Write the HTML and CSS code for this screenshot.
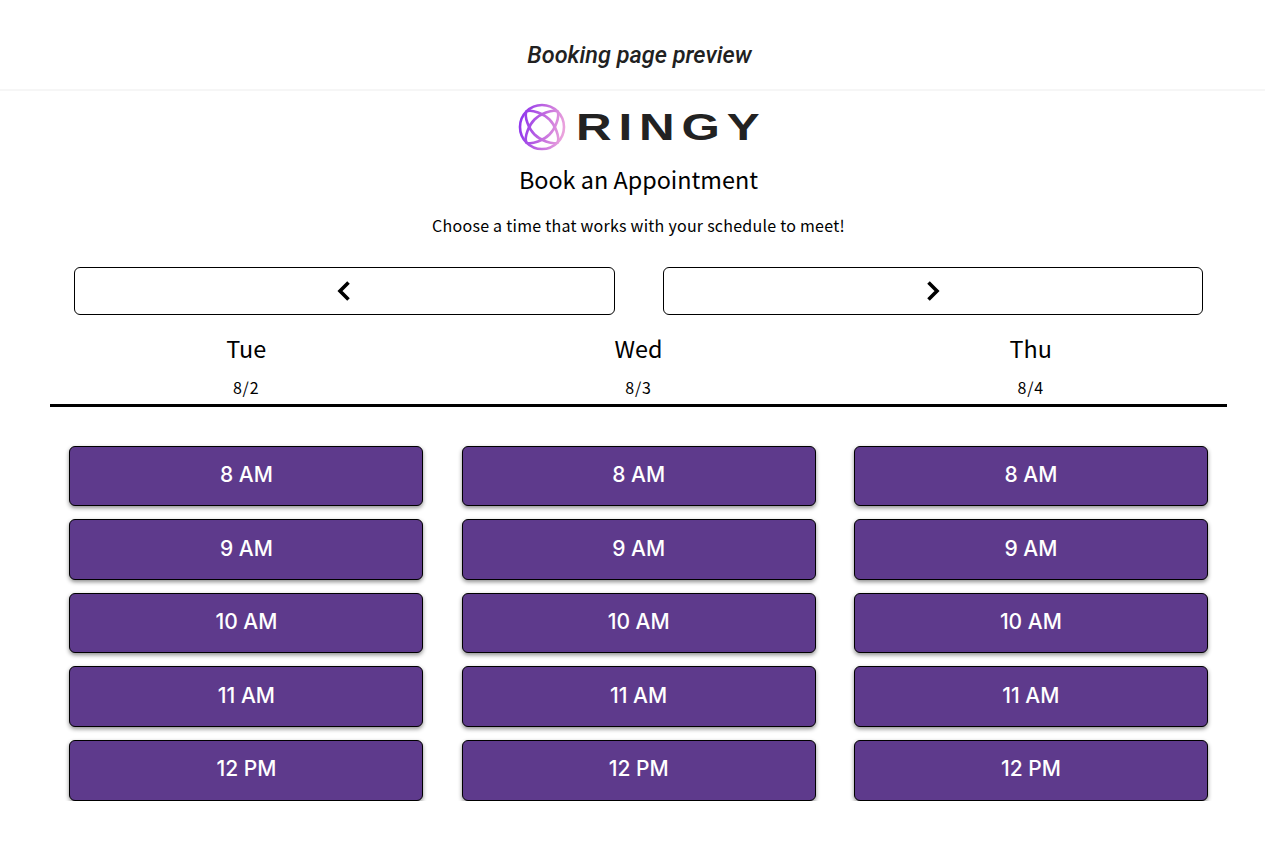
FILE: index.html
```html
<!DOCTYPE html>
<html lang="en">
<head>
  <meta charset="UTF-8" />
  <title>Booking page preview</title>
  <link rel="stylesheet" href="styles.css">
</head>
<body>

<header class="previewBar">Booking page preview</header>

<main class="booking">
  <div class="logo">
    <svg class="logoMark" width="48" height="48" viewBox="0 0 48 48" fill="none">
      <defs>
        <linearGradient id="ringyGrad" gradientUnits="userSpaceOnUse" x1="1" y1="20" x2="47" y2="28">
          <stop offset="0" stop-color="#8f35ee" />
          <stop offset="0.5" stop-color="#c069e0" />
          <stop offset="1" stop-color="#eda6dc" />
        </linearGradient>
      </defs>
      <g stroke="url(#ringyGrad)" stroke-width="2.6">
        <circle cx="24" cy="24" r="22" />
        <path d="M8.400 8.400C14 6 26 11 31.500 16.500C37 22 42 34 39.600 39.600C34 42 22 37 16.500 31.500C11 26 6 14 8.400 8.400Z" />
        <path d="M39.600 8.400C34 6 22 11 16.500 16.500C11 22 6 34 8.400 39.600C14 42 26 37 31.500 31.500C37 26 42 14 39.600 8.400Z" />
      </g>
    </svg>
    <span class="logoText">RINGY</span>
  </div>

  <h1 class="title">Book an Appointment</h1>
  <p class="subtitle">Choose a time that works with your schedule to meet!</p>

  <div class="navRow">
    <button class="navButton" aria-label="Previous">
      <svg width="24" height="24" viewBox="0 0 24 24"><path d="M16.500 3.500 8 12l8.500 8.500" /></svg>
    </button>
    <button class="navButton" aria-label="Next">
      <svg width="24" height="24" viewBox="0 0 24 24"><path d="M7.500 3.500 16 12l-8.500 8.500" /></svg>
    </button>
  </div>

  <div class="dayHead">
    <div class="day"><div class="dayName">Tue</div><div class="dayDate">8/2</div></div>
    <div class="day"><div class="dayName">Wed</div><div class="dayDate">8/3</div></div>
    <div class="day"><div class="dayName">Thu</div><div class="dayDate">8/4</div></div>
  </div>

  <div class="slots">
    <div class="slotColumn">
      <button class="slot">8 AM</button>
      <button class="slot">9 AM</button>
      <button class="slot">10 AM</button>
      <button class="slot">11 AM</button>
      <button class="slot">12 PM</button>
    </div>
    <div class="slotColumn">
      <button class="slot">8 AM</button>
      <button class="slot">9 AM</button>
      <button class="slot">10 AM</button>
      <button class="slot">11 AM</button>
      <button class="slot">12 PM</button>
    </div>
    <div class="slotColumn">
      <button class="slot">8 AM</button>
      <button class="slot">9 AM</button>
      <button class="slot">10 AM</button>
      <button class="slot">11 AM</button>
      <button class="slot">12 PM</button>
    </div>
  </div>
</main>

</body>
</html>
```

FILE: styles.css
```css
body {
  margin: 0;
  background: white;
  color: black;
  font-family: "Noto Sans CJK JP", "Noto Sans", sans-serif;
}

.previewBar {
  height: 91px;
  box-sizing: border-box;
  padding: 40px 0 0 14px;
  border-bottom: 2px solid #f6f6f6;
  text-align: center;
  font-family: Roboto, sans-serif;
  font-size: 23.5px;
  line-height: 30px;
  font-weight: 500;
  font-style: italic;
  color: #212121;
}

.booking {
  width: 1177px;
  margin-left: 50px;
}

.logo {
  display: flex;
  justify-content: center;
  align-items: center;
  gap: 10px;
  height: 48px;
  margin-top: 12px;
}

.logoText {
  display: inline-block;
  width: 183px;
  padding-top: 2px;
  font-family: "Liberation Sans", sans-serif;
  font-size: 36px;
  line-height: 48px;
  font-weight: 700;
  letter-spacing: 5px;
  color: #222;
  white-space: nowrap;
  transform: scaleX(1.37);
  transform-origin: left center;
}

.title {
  margin: 10px 0 0;
  text-align: center;
  font-size: 23.4px;
  line-height: 36px;
  font-weight: 400;
}

.subtitle {
  margin: 16px 0 0;
  text-align: center;
  font-size: 16px;
  line-height: 24px;
  letter-spacing: 0.25px;
}

.navRow {
  display: flex;
  justify-content: center;
  gap: 48px;
  margin-top: 30px;
}

.navButton {
  width: 540.5px;
  height: 48px;
  display: flex;
  align-items: center;
  justify-content: center;
  padding: 0;
  background: white;
  border: 1px solid black;
  border-radius: 6px;
}

.navButton path {
  fill: none;
  stroke: black;
  stroke-width: 3.6;
}

.dayHead {
  display: grid;
  grid-template-columns: repeat(3, 1fr);
  border-bottom: 3px solid black;
  margin-top: 15px;
  height: 74px;
  text-align: center;
}

.dayName {
  font-size: 23.4px;
  line-height: 36px;
}

.dayDate {
  margin-top: 9px;
  font-size: 16px;
  line-height: 24px;
  letter-spacing: 0.8px;
}

.slots {
  display: grid;
  grid-template-columns: repeat(3, 1fr);
  margin: 38.6px 0 0 0.3px;
}

.slotColumn {
  display: flex;
  flex-direction: column;
  gap: 12.9px;
  align-items: center;
}

.slot {
  width: 354px;
  height: 60.7px;
  padding: 0 0 3px;
  background: #5e3a8c;
  color: white;
  border: 1px solid black;
  border-radius: 6px;
  box-shadow: 0 2px 4px rgba(0, 0, 0, 0.45);
  font-family: Inter, sans-serif;
  font-size: 21px;
  font-weight: 500;
}
```
